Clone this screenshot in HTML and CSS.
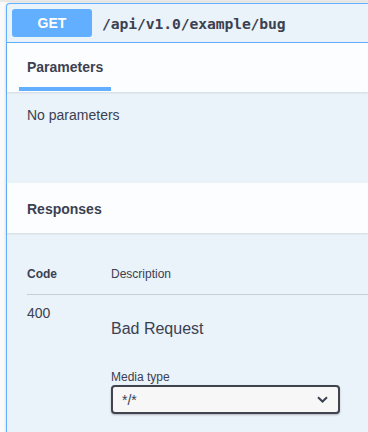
FILE: index.html
```html
<!DOCTYPE html>
<html lang="en">
<head>
    <meta charset="UTF-8">
    <meta name="viewport" content="width=device-width, initial-scale=1.0">
    <title>GET /api/v1.0/example/bug</title>
    <link rel="stylesheet" href="styles.css">
</head>
<body>
    <div class="opblock">
        <div class="summary">
            <span class="method">GET</span>
            <span class="path">/api/v1.0/example/bug</span>
        </div>

        <div class="section-header tabs">
            <div class="tab active">Parameters</div>
        </div>
        <div class="params-body">
            <p class="muted">No parameters</p>
        </div>

        <div class="section-header">
            <h4>Responses</h4>
        </div>
        <div class="responses-body">
            <div class="resp-table">
                <div class="col-head code-col">Code</div>
                <div class="col-head desc-col">Description</div>

                <div class="code-cell">400</div>
                <div class="desc-cell">
                    <p class="desc">Bad Request</p>
                    <label class="media-label">Media type</label>
                    <div class="select">
                        <span>*/*</span>
                        <svg width="11" height="7" viewBox="0 0 11 7">
                            <path d="M1 1.2 L5.5 5.5 L10 1.2" fill="none" stroke="#3b4151" stroke-width="2"/>
                        </svg>
                    </div>
                </div>
            </div>
        </div>
    </div>
</body>
</html>
```

FILE: styles.css
```css
html, body {
    height: 100%;
    overflow: hidden;
}

body {
    box-sizing: border-box;
    margin: 0;
    padding: 3px 0 0 6px;
    font-family: 'Liberation Sans', Arial, sans-serif;
    color: #3b4151;
    background: linear-gradient(#e9e9e9 0, #e9e9e9 2px, #fafafa 2px);
}

.opblock {
    box-sizing: border-box;
    height: 100%;
    border: 1px solid #61affe;
    border-right: none;
    border-bottom: none;
    border-radius: 4px 0 0 0;
    background: rgba(97, 175, 254, 0.1);
    box-shadow: 0 0 3px rgba(0, 0, 0, 0.19);
}

.summary {
    display: flex;
    align-items: center;
    padding: 5px;
    border-bottom: 1px solid #61affe;
}

.method {
    min-width: 80px;
    padding: 4px 0;
    line-height: 20px;
    font-size: 14px;
    font-weight: bold;
    text-align: center;
    color: #fff;
    background: #61affe;
    border-radius: 3px;
}

.path {
    margin-left: 10px;
    font-family: 'DejaVu Sans Mono', 'Liberation Mono', monospace;
    font-size: 14.7px;
    font-weight: bold;
    letter-spacing: -0.1px;
    color: #3b4151;
}

.section-header {
    background: rgba(255, 255, 255, 0.8);
    box-shadow: 0 1px 2px rgba(0, 0, 0, 0.1);
}

.section-header h4 {
    margin: 0;
    padding: 16px 20px 14px;
    font-size: 14px;
    line-height: 20px;
}

.tabs {
    display: flex;
    padding: 14px 0 1px 12px;
}

.tab {
    padding: 0 8px;
    font-size: 14px;
    font-weight: bold;
    line-height: 20px;
}

.tab.active::after {
    content: '';
    display: block;
    height: 4px;
    margin: 10px -8px 0;
    background: #61affe;
}

.params-body {
    height: 91px;
    padding: 0 20px;
}

.muted {
    margin: 0;
    padding-top: 13px;
    font-size: 14px;
    line-height: 20px;
}

.responses-body {
    padding: 33px 0 0 20px;
}

.resp-table {
    display: grid;
    grid-template-columns: 84px 1fr;
}

.col-head {
    font-size: 12px;
    line-height: 16px;
    padding-bottom: 12px;
    border-bottom: 1px solid rgba(59, 65, 81, 0.2);
}

.code-col {
    font-weight: bold;
}

.code-cell {
    padding-top: 8px;
    font-size: 14px;
    line-height: 20px;
}

.desc-cell {
    padding-top: 8px;
}

.desc {
    margin: 16px 0 30px;
    font-size: 16px;
    line-height: 20px;
}

.media-label {
    display: block;
    font-size: 12px;
    line-height: 16px;
}

.select {
    display: flex;
    align-items: center;
    justify-content: space-between;
    box-sizing: border-box;
    width: 229px;
    height: 29px;
    padding: 0 10px 0 9px;
    font-size: 14px;
    border: 2px solid #41444e;
    border-radius: 4px;
    background: #f7f7f7;
    box-shadow: 0 1px 2px rgba(0, 0, 0, 0.25);
}
```
